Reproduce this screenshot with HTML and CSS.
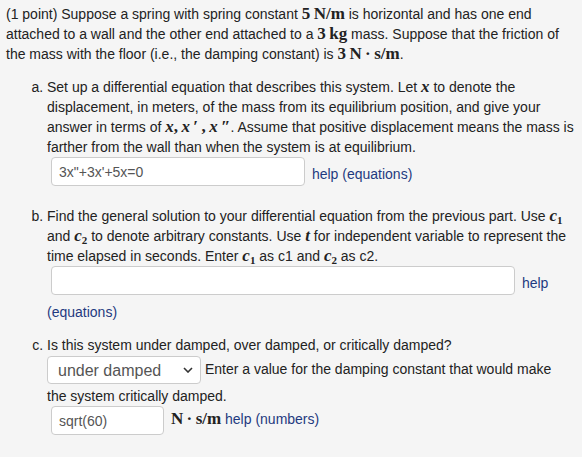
FILE: index.html
```html
<!DOCTYPE html>
<html>
<head>
<meta charset="utf-8">
<link rel="stylesheet" href="styles.css">
</head>
<body>
<div class="problem">
<p class="intro">(1 point) Suppose a spring with spring constant <span class="m">5&thinsp;N/m</span> is horizontal and has one end attached to a wall and the other end attached to a <span class="m">3&thinsp;kg</span> mass. Suppose that the friction of the mass with the floor (i.e., the damping constant) is <span class="m">3&thinsp;N&thinsp;·&thinsp;s/m</span>.</p>
<ol class="parts">
<li class="part">Set up a differential equation that describes this system. Let <span class="mi">x</span> to denote the displacement, in meters, of the mass from its equilibrium position, and give your answer in terms of <span class="mi">x</span><span class="m">,&thinsp;</span><span class="mi">x</span><span class="m">&thinsp;′&thinsp;,&thinsp;</span><span class="mi">x</span><span class="m">&thinsp;″</span>. Assume that positive displacement means the mass is farther from the wall than when the system is at equilibrium.<br>
 <input class="ans ans-a" type="text" value="3x&quot;+3x'+5x=0"> <a class="help" href="#">help (equations)</a></li>
<li class="part">Find the general solution to your differential equation from the previous part. Use <span class="mi">c</span><sub class="sub">1</sub> and <span class="mi">c</span><sub class="sub">2</sub> to denote arbitrary constants. Use <span class="mi">t</span> for independent variable to represent the time elapsed in seconds. Enter <span class="mi">c</span><sub class="sub">1</sub> as c1 and <span class="mi">c</span><sub class="sub">2</sub> as c2.<br>
 <input class="ans ans-b" type="text" value=""> <a class="help" href="#">help (equations)</a></li>
<li class="part">Is this system under damped, over damped, or critically damped?<br><span class="sel-wrap"><select class="sel"><option>under damped</option><option>over damped</option><option>critically damped</option></select><svg class="chev" width="10" height="6" viewBox="0 0 10 6"><path d="M1 1 L5 5 L9 1" fill="none" stroke="#333" stroke-width="1.6"/></svg></span> Enter a value for the damping constant that would make the system critically damped.<br>
 <input class="ans ans-c" type="text" value="sqrt(60)"> <span class="m unit">N&thinsp;·&thinsp;s/m</span> <a class="help" href="#">help (numbers)</a></li>
</ol>
</div>
</body>
</html>
```

FILE: styles.css
```css
html, body {
  margin: 0;
  padding: 0;
  background: #f5f5f5;
}
body {
  font-family: "Liberation Sans", Arial, sans-serif;
  font-size: 14px;
  line-height: 20px;
  color: #222;
}
.problem {
  padding: 4px 8px 0 6px;
}
.intro {
  margin: 0 0 13px 0;
}
.m {
  font-family: "Liberation Serif", "Times New Roman", serif;
  font-size: 17px;
  font-weight: bold;
  line-height: 0;
}
.mi {
  font-family: "Liberation Serif", "Times New Roman", serif;
  font-size: 17px;
  font-style: italic;
  font-weight: bold;
  line-height: 0;
}
.sub {
  font-family: "Liberation Serif", "Times New Roman", serif;
  font-size: 11px;
  font-weight: bold;
  line-height: 0;
  vertical-align: -3px;
}
.parts {
  list-style: lower-alpha;
  margin: 0;
  padding-left: 41px;
}
.part {
  margin-bottom: 13px;
}
.ans {
  box-sizing: border-box;
  height: 29px;
  padding: 4px 7px;
  border: 1px solid #cccccc;
  border-radius: 4px;
  background: #ffffff;
  font-family: "Liberation Sans", Arial, sans-serif;
  font-size: 14px;
  color: #555555;
  vertical-align: middle;
  margin: 0 3px 7px 4px;
}
.ans-a { width: 254px; }
.ans-b { width: 464px; }
.ans-c { width: 113px; margin-bottom: 0; }
.help {
  color: #1f3a80;
  text-decoration: none;
}
.sel-wrap {
  position: relative;
  display: inline-block;
  vertical-align: middle;
  margin: 1px 0 2px 0;
}
.sel {
  -webkit-appearance: none;
  appearance: none;
  box-sizing: border-box;
  width: 154px;
  height: 28px;
  padding: 0 10px;
  border: 1px solid #cccccc;
  border-radius: 4px;
  background: #ffffff;
  font-family: "Liberation Sans", Arial, sans-serif;
  font-size: 16px;
  color: #555555;
  margin: 0;
  display: block;
}
.chev {
  position: absolute;
  right: 8px;
  top: 11px;
  pointer-events: none;
}
```
